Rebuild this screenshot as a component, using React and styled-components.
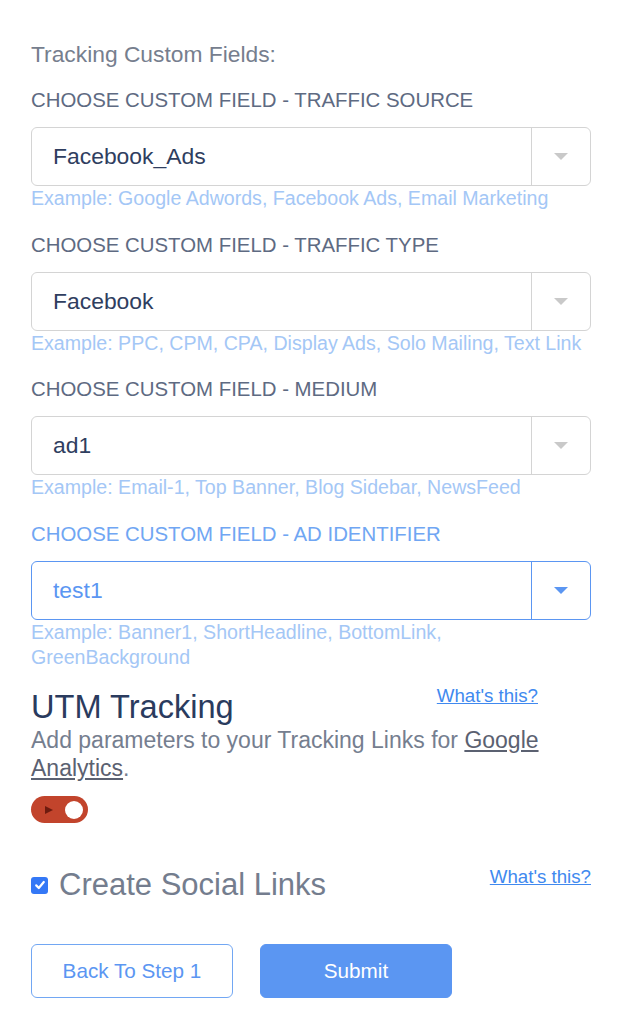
import React from "react";
import styled, { createGlobalStyle } from "styled-components";

const GlobalStyle = createGlobalStyle`
  body {
    margin: 0;
    background: #ffffff;
    font-family: "Liberation Sans", Arial, Helvetica, sans-serif;
  }
`;

const Page = styled.div`
  width: 560px;
  padding: 40px 0 30px 31px;
`;

const Heading = styled.div`
  font-size: 22.8px;
  line-height: 28px;
  color: #767e8e;
  margin-bottom: 19px;
`;

const Field = styled.div`
  margin-bottom: 20.5px;
`;

const Label = styled.div`
  font-size: 20.4px;
  line-height: 26px;
  text-transform: uppercase;
  color: ${(p) => (p.active ? "#70a6f3" : "#5e6a82")};
  margin-bottom: 14px;
`;

const Select = styled.div`
  display: flex;
  height: 59px;
  box-sizing: border-box;
  border: 1px solid ${(p) => (p.active ? "#5b96f2" : "#d4d4d4")};
  border-radius: 6px;
`;

const Value = styled.div`
  flex: 1;
  display: flex;
  align-items: center;
  padding-left: 21px;
  font-size: 22.9px;
  color: ${(p) => (p.active ? "#5b96f2" : "#2f3e5f")};
`;

const ArrowCell = styled.div`
  width: 58px;
  display: flex;
  align-items: center;
  justify-content: center;
  border-left: 1px solid ${(p) => (p.active ? "#5b96f2" : "#d4d4d4")};
`;

const Caret = styled.span`
  width: 0;
  height: 0;
  border-left: 7px solid transparent;
  border-right: 7px solid transparent;
  border-top: 7px solid ${(p) => (p.active ? "#5b96f2" : "#c9c9c9")};
`;

const Hint = styled.div`
  font-size: 19.6px;
  line-height: 25px;
  color: #a4c7f6;
`;

const Utm = styled.div`
  width: 511px;
  margin-top: -2px;
`;

const HeadRow = styled.div`
  display: flex;
  justify-content: space-between;
  align-items: flex-start;
`;

const UtmTitle = styled.h2`
  margin: 0;
  font-size: 32.6px;
  line-height: 38px;
  font-weight: normal;
  color: #2a3b5e;
`;

const Help = styled.a`
  font-size: 18.7px;
  line-height: 20px;
  color: #4089ef;
  text-decoration: underline;
  cursor: pointer;
  margin-right: ${(p) => p.inset || 0};
  margin-top: ${(p) => p.lift || 0};
`;

const Desc = styled.p`
  margin: 0;
  font-size: 23px;
  line-height: 28px;
  color: #757e8f;
  a {
    color: #5b6171;
    text-decoration: underline;
  }
`;

const Toggle = styled.div`
  margin-top: 14px;
  width: 57px;
  height: 27px;
  box-sizing: border-box;
  border-radius: 14px;
  background: #c2442c;
  display: flex;
  align-items: center;
  justify-content: space-between;
  padding: 0 5px 0 14px;
`;

const Play = styled.span`
  width: 0;
  height: 0;
  border-top: 4.5px solid transparent;
  border-bottom: 4.5px solid transparent;
  border-left: 8px solid #6e1b0f;
`;

const Knob = styled.span`
  width: 18px;
  height: 18px;
  border-radius: 50%;
  background: #ffffff;
`;

const SocialRow = styled.div`
  margin-top: 44px;
  display: flex;
  justify-content: space-between;
  align-items: flex-start;
`;

const CheckLabel = styled.label`
  display: flex;
  align-items: center;
  gap: 11px;
  font-size: 31px;
  line-height: 36px;
  color: #747d8e;
`;

const Box = styled.span`
  width: 17px;
  height: 17px;
  border-radius: 3px;
  background: #3478f6;
  display: flex;
  align-items: center;
  justify-content: center;
`;

const Buttons = styled.div`
  margin-top: 41px;
  display: flex;
  gap: 27px;
`;

const Button = styled.button`
  width: ${(p) => (p.primary ? "192px" : "202px")};
  height: 54px;
  border-radius: 6px;
  border: 1px solid ${(p) => (p.primary ? "#5b96f2" : "#72a7f3")};
  background: ${(p) => (p.primary ? "#5b96f2" : "#ffffff")};
  color: ${(p) => (p.primary ? "#ffffff" : "#5b96f2")};
  font-family: "Liberation Sans", Arial, sans-serif;
  font-size: 20.7px;
  cursor: pointer;
`;

const fields = [
  {
    label: "Choose custom field - Traffic Source",
    value: "Facebook_Ads",
    hint: "Example: Google Adwords, Facebook Ads, Email Marketing",
  },
  {
    label: "Choose custom field - Traffic Type",
    value: "Facebook",
    hint: "Example: PPC, CPM, CPA, Display Ads, Solo Mailing, Text Link",
  },
  {
    label: "Choose custom field - Medium",
    value: "ad1",
    hint: "Example: Email-1, Top Banner, Blog Sidebar, NewsFeed",
  },
  {
    label: "Choose custom field - Ad Identifier",
    value: "test1",
    hint: "Example: Banner1, ShortHeadline, BottomLink, GreenBackground",
    active: true,
  },
];

const App = () => {
  return (
    <Page>
      <GlobalStyle />
      <Heading>Tracking Custom Fields:</Heading>
      {fields.map((f) => (
        <Field key={f.label}>
          <Label active={f.active}>{f.label}</Label>
          <Select active={f.active}>
            <Value active={f.active}>{f.value}</Value>
            <ArrowCell active={f.active}>
              <Caret active={f.active} />
            </ArrowCell>
          </Select>
          <Hint>{f.hint}</Hint>
        </Field>
      ))}

      <Utm>
        <HeadRow>
          <UtmTitle>UTM Tracking</UtmTitle>
          <Help inset="4px" lift="-2px">What's this?</Help>
        </HeadRow>
        <Desc>
          Add parameters to your Tracking Links for <a>Google</a> <a>Analytics</a>.
        </Desc>
        <Toggle>
          <Play />
          <Knob />
        </Toggle>
      </Utm>

      <SocialRow>
        <CheckLabel>
          <Box>
            <svg width="12" height="12" viewBox="0 0 12 12">
              <path
                d="M2.2 6.4 L4.8 9 L9.8 3"
                fill="none"
                stroke="#fff"
                strokeWidth="2.2"
                strokeLinecap="round"
                strokeLinejoin="round"
              />
            </svg>
          </Box>
          Create Social Links
        </CheckLabel>
        <Help>What's this?</Help>
      </SocialRow>

      <Buttons>
        <Button>Back To Step 1</Button>
        <Button primary>Submit</Button>
      </Buttons>
    </Page>
  );
};

export default App;
